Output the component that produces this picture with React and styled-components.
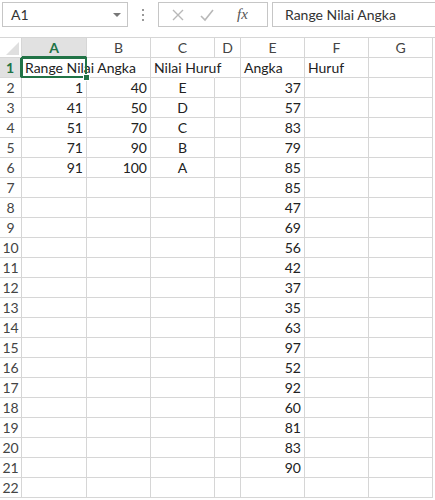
import React from 'react';
import styled, { createGlobalStyle } from 'styled-components';

const GlobalStyle = createGlobalStyle`
  html, body {
    margin: 0;
    background: #fff;
  }
  body {
    font-family: Lato, "Open Sans", sans-serif;
    color: #222;
  }
`;

const GREEN = '#217346';
const GRID = '#d6d6d6';

const Page = styled.div`
  width: 435px;
  height: 500px;
  overflow: hidden;
  background: #fff;
`;

const Toolbar = styled.div`
  display: flex;
  align-items: flex-start;
  height: 37px;
  padding: 2px 0 0 2px;
  box-sizing: border-box;
`;

const NameBox = styled.div`
  display: flex;
  align-items: center;
  justify-content: space-between;
  width: 126px;
  height: 25px;
  box-sizing: border-box;
  border: 1px solid #c6c6c6;
  padding: 0 6px 0 8px;
  font-size: 14px;
  color: #333;
`;

const Caret = styled.span`
  width: 0;
  height: 0;
  border-left: 4px solid transparent;
  border-right: 4px solid transparent;
  border-top: 4px solid #777;
`;

const Dots = styled.div`
  display: flex;
  flex-direction: column;
  gap: 3px;
  width: 30px;
  height: 25px;
  align-items: center;
  justify-content: center;
  span {
    width: 2px;
    height: 2px;
    background: #999;
  }
`;

const FxButtons = styled.div`
  display: flex;
  align-items: center;
  width: 110px;
  height: 25px;
  box-sizing: border-box;
  border: 1px solid #c6c6c6;
  margin-right: 4px;
  padding-left: 12px;
  gap: 14px;
`;

const FxLabel = styled.span`
  font-family: "Liberation Serif", serif;
  font-style: italic;
  font-size: 15px;
  color: #555;
  margin-left: 8px;
`;

const FormulaInput = styled.div`
  flex: 1;
  height: 25px;
  box-sizing: border-box;
  border: 1px solid #c6c6c6;
  border-right: none;
  padding-left: 12px;
  display: flex;
  align-items: center;
  font-size: 14px;
  color: #333;
  white-space: nowrap;
`;

const Sheet = styled.div`
  display: grid;
  grid-template-columns: 22px 65px 64px 64px 26px 64px 64px 64px 2px;
  grid-auto-rows: 20px;
  border-top: 1px solid ${GRID};
`;

const Cell = styled.div`
  box-sizing: border-box;
  border-right: 1px solid ${props => (props.hideRight ? 'transparent' : GRID)};
  border-bottom: 1px solid ${GRID};
  font-size: 14px;
  line-height: 19px;
  padding: 0 3px;
  white-space: nowrap;
  overflow: visible;
  position: relative;
  text-align: ${props => props.align || 'left'};
  color: #222;
`;

const ColHead = styled.div`
  box-sizing: border-box;
  border-right: 1px solid ${GRID};
  border-bottom: ${props => (props.active ? `2px solid ${GREEN}` : `1px solid ${GRID}`)};
  background: ${props => (props.active ? '#e1e1e1' : '#fff')};
  color: ${props => (props.active ? GREEN : '#444')};
  font-weight: ${props => (props.active ? 700 : 400)};
  font-size: 14px;
  line-height: 19px;
  text-align: center;
`;

const RowHead = styled.div`
  box-sizing: border-box;
  border-right: ${props => (props.active ? `2px solid ${GREEN}` : `1px solid ${GRID}`)};
  border-bottom: 1px solid ${GRID};
  background: ${props => (props.active ? '#e1e1e1' : '#fff')};
  color: ${props => (props.active ? GREEN : '#444')};
  font-weight: ${props => (props.active ? 700 : 400)};
  font-size: 14px;
  line-height: 19px;
  text-align: center;
`;

const Corner = styled.div`
  box-sizing: border-box;
  border-right: 1px solid ${GRID};
  border-bottom: 1px solid ${GRID};
  position: relative;
  &::after {
    content: '';
    position: absolute;
    right: 2px;
    bottom: 2px;
    width: 0;
    height: 0;
    border-left: 13px solid transparent;
    border-bottom: 13px solid #dfdfdf;
  }
`;

const Selection = styled.div`
  position: absolute;
  z-index: 2;
  left: -1px;
  top: -1px;
  right: -1px;
  bottom: -1px;
  border: 2px solid ${GREEN};
  pointer-events: none;
  &::after {
    content: '';
    position: absolute;
    right: -5px;
    bottom: -5px;
    width: 5px;
    height: 5px;
    background: ${GREEN};
    border: 1px solid #fff;
  }
`;

const XIcon = () => (
  <svg width="14" height="14" viewBox="0 0 14 14">
    <path d="M2 2 L12 12 M12 2 L2 12" stroke="#b8b8b8" strokeWidth="1.4" fill="none" />
  </svg>
);

const CheckIcon = () => (
  <svg width="16" height="14" viewBox="0 0 16 14">
    <path d="M2 8 L6 12 L14 2" stroke="#b8b8b8" strokeWidth="1.6" fill="none" />
  </svg>
);

const columns = ['A', 'B', 'C', 'D', 'E', 'F', 'G'];

const rangeRows = [
  ['1', '40', 'E'],
  ['41', '50', 'D'],
  ['51', '70', 'C'],
  ['71', '90', 'B'],
  ['91', '100', 'A'],
];

const angka = [37, 57, 83, 79, 85, 85, 47, 69, 56, 42, 37, 35, 63, 97, 52, 92, 60, 81, 83, 90];

const buildRow = rowNum => {
  if (rowNum === 1) {
    return [
      { text: 'Range Nilai Angka', selected: true },
      { text: '' },
      { text: 'Nilai Huruf', hideRight: true },
      { text: '' },
      { text: 'Angka' },
      { text: 'Huruf' },
      { text: '' },
    ];
  }
  const r = rangeRows[rowNum - 2];
  const e = angka[rowNum - 2];
  return [
    { text: r ? r[0] : '', align: 'right' },
    { text: r ? r[1] : '', align: 'right' },
    { text: r ? r[2] : '', align: 'center' },
    { text: '' },
    { text: e !== undefined ? String(e) : '', align: 'right' },
    { text: '' },
    { text: '' },
  ];
};

const App = () => {
  const rows = Array.from({ length: 22 }, (_, i) => i + 1);
  return (
    <Page>
      <GlobalStyle />
      <Toolbar>
        <NameBox>
          A1
          <Caret />
        </NameBox>
        <Dots>
          <span />
          <span />
          <span />
        </Dots>
        <FxButtons>
          <XIcon />
          <CheckIcon />
          <FxLabel>fx</FxLabel>
        </FxButtons>
        <FormulaInput>Range Nilai Angka</FormulaInput>
      </Toolbar>
      <Sheet>
        <Corner />
        {columns.map(c => (
          <ColHead key={c} active={c === 'A'}>
            {c}
          </ColHead>
        ))}
        <div />
        {rows.map(n => (
          <React.Fragment key={n}>
            <RowHead active={n === 1}>{n}</RowHead>
            {buildRow(n).map((cell, i) => (
              <Cell key={i} align={cell.align} hideRight={cell.hideRight}>
                {cell.text}
                {cell.selected && <Selection />}
              </Cell>
            ))}
            <div />
          </React.Fragment>
        ))}
      </Sheet>
    </Page>
  );
};

export default App;
